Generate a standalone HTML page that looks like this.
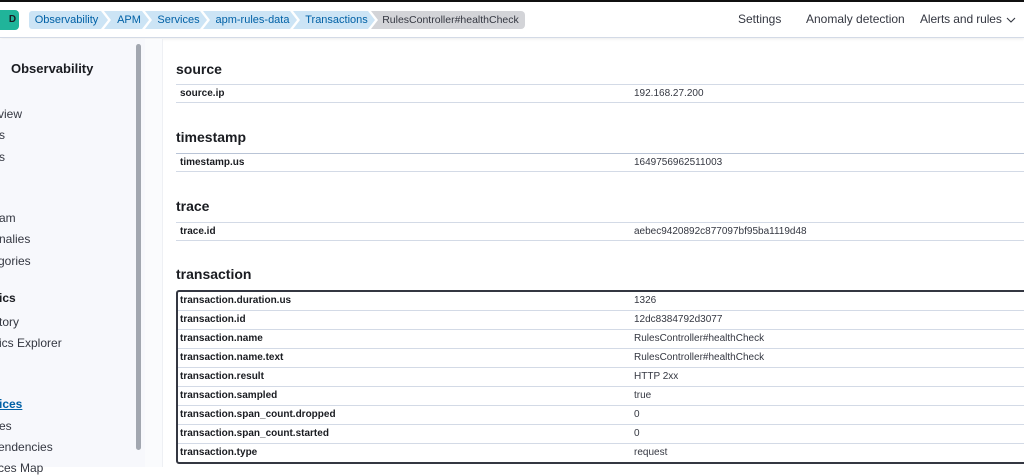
<!DOCTYPE html>
<html><head><style>
*{margin:0;padding:0;box-sizing:border-box}
body{width:1024px;height:467px;overflow:hidden;background:#fff;font-family:"Liberation Sans",sans-serif;position:relative;color:#343741}
.a{position:absolute;white-space:nowrap}
.top{position:absolute;left:0;top:0;width:1024px;height:2px;background:#111}
.hdr{position:absolute;left:0;top:2px;width:1024px;height:36px;background:#fff;border-bottom:1px solid #d3dae6;box-shadow:0 1px 3px rgba(0,0,0,.08)}
.bc{position:absolute;top:11px;height:18px;font-size:11px;line-height:18px;color:#0061a6;background:#cce4f5;text-align:center;padding-left:5px;clip-path:polygon(0 0,calc(100% - 7px) 0,100% 50%,calc(100% - 7px) 100%,0 100%,7px 50%)}
.side{position:absolute;left:0;top:39px;width:145px;height:428px;background:#f7f8fc}
.gap{position:absolute;left:145px;top:39px;width:18px;height:428px;background:#fafbfd;border-right:1px solid #eef0f4}
.si{font-size:12px;color:#343741}
.h{font-size:14px;font-weight:bold;color:#1a1c21}
.row{position:absolute;left:176px;width:860px;height:19px;border-top:1px solid #d3dae6;border-bottom:1px solid #d3dae6;font-size:10px;line-height:17px}
.k{position:absolute;left:4px;font-weight:bold;color:#1a1c21}
.v{position:absolute;left:458px;color:#343741}
.tbl{position:absolute;left:176px;top:290px;width:860px;height:174px;border:2px solid #343741;border-radius:3px}
.tr{position:relative;height:19px;border-bottom:1px solid #d3dae6;font-size:10px;line-height:18px}
.tr:last-child{border-bottom:none}
.tr .k{left:2px}.tr .v{left:456px}
</style></head><body>
<div class="top"></div>
<div class="hdr">
<div class="a" style="left:0;top:8px;width:19px;height:20px;background:#20b49a;border-radius:0 4px 4px 0;font-size:10px;font-weight:bold;line-height:20px;text-align:center;padding-left:6px;color:#1a1c21">D</div>
</div>
<div class="bc" style="left:29px;width:79px;padding-left:0;padding-right:4px;clip-path:polygon(0 0,calc(100% - 7px) 0,100% 50%,calc(100% - 7px) 100%,0 100%);border-radius:3px 0 0 3px">Observability</div>
<div class="bc" style="left:104px;width:45px">APM</div>
<div class="bc" style="left:145px;width:62px">Services</div>
<div class="bc" style="left:203px;width:94px">apm-rules-data</div>
<div class="bc" style="left:293px;width:82px">Transactions</div>
<div class="bc" style="left:371px;background:#d3d4d8;color:#343741;width:154px;font-size:10.5px;clip-path:polygon(0 0,100% 0,100% 100%,0 100%,7px 50%);border-radius:0 4px 4px 0">RulesController#healthCheck</div>
<div class="a" style="left:738px;top:12px;font-size:12px">Settings</div>
<div class="a" style="left:806px;top:12px;font-size:12px">Anomaly detection</div>
<div class="a" style="left:920px;top:12px;font-size:12px;letter-spacing:-0.1px">Alerts and rules</div>
<svg class="a" style="left:1006px;top:16px" width="10" height="8"><path d="M1 2l4 4 4-4" fill="none" stroke="#343741" stroke-width="1.1"/></svg>

<div class="side"></div>
<div class="a" style="left:136px;top:44px;width:5px;height:406px;background:#a2a7b0;border-radius:3px"></div>
<div class="gap"></div>
<div class="a h" style="left:11px;top:61px;font-size:13px">Observability</div>
<div class="a si" style="left:-2px;top:107px">view</div>
<div class="a si" style="left:-1px;top:128px">s</div>
<div class="a si" style="left:-1px;top:150px">s</div>
<div class="a si" style="left:-1px;top:211px">am</div>
<div class="a si" style="left:-1px;top:232px">nalies</div>
<div class="a si" style="left:-2px;top:254px">gories</div>
<div class="a si" style="left:-1px;top:291px;font-weight:bold;color:#1a1c21">ics</div>
<div class="a si" style="left:-1px;top:315px">tory</div>
<div class="a si" style="left:-1px;top:336px">ics Explorer</div>
<div class="a si" style="left:-1px;top:397px;color:#0061a6;text-decoration:underline;font-weight:bold">ices</div>
<div class="a si" style="left:-1px;top:419px">es</div>
<div class="a si" style="left:-2px;top:440px">endencies</div>
<div class="a si" style="left:-2px;top:461px">ces Map</div>

<div class="a h" style="left:176px;top:61px">source</div>
<div class="row" style="top:84px"><span class="k">source.ip</span><span class="v">192.168.27.200</span></div>
<div class="a h" style="left:176px;top:129px">timestamp</div>
<div class="row" style="top:153px;border-top-color:#b9c4d6"><span class="k">timestamp.us</span><span class="v">1649756962511003</span></div>
<div class="a h" style="left:176px;top:198px">trace</div>
<div class="row" style="top:222px"><span class="k">trace.id</span><span class="v">aebec9420892c877097bf95ba1119d48</span></div>
<div class="a h" style="left:176px;top:266px">transaction</div>
<div class="tbl">
<div class="tr"><span class="k">transaction.duration.us</span><span class="v">1326</span></div>
<div class="tr"><span class="k">transaction.id</span><span class="v">12dc8384792d3077</span></div>
<div class="tr"><span class="k">transaction.name</span><span class="v">RulesController#healthCheck</span></div>
<div class="tr"><span class="k">transaction.name.text</span><span class="v">RulesController#healthCheck</span></div>
<div class="tr"><span class="k">transaction.result</span><span class="v">HTTP 2xx</span></div>
<div class="tr"><span class="k">transaction.sampled</span><span class="v">true</span></div>
<div class="tr"><span class="k">transaction.span_count.dropped</span><span class="v">0</span></div>
<div class="tr"><span class="k">transaction.span_count.started</span><span class="v">0</span></div>
<div class="tr"><span class="k">transaction.type</span><span class="v">request</span></div>
</div>
</body></html>
